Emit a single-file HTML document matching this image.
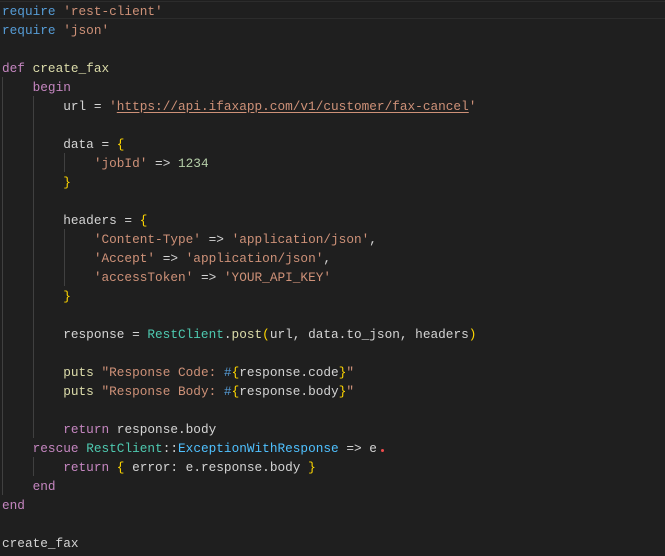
<!DOCTYPE html>
<html><head><meta charset="utf-8"><style>
html,body{margin:0;padding:0;background:#1f1f1f;width:665px;height:556px;overflow:hidden}
pre{position:absolute;left:2px;top:1.5px;margin:0;font-family:"Liberation Mono",monospace;font-size:12.75px;line-height:19px;color:#d4d4d4;white-space:pre}
.k{color:#569cd6}.s{color:#ce9178}.d{color:#c586c0}.f{color:#dcdcaa}.c{color:#4ec9b0}.c2{color:#4fc1ff}.b{color:#ffd700}.n{color:#b5cea8}.u{text-decoration:underline;text-underline-offset:2px}
.g{position:absolute;width:1px;background:#404040}
.cur{position:absolute;left:0;top:1px;width:665px;height:18px;border-top:1px solid #2c2c2c;border-bottom:1px solid #2c2c2c;box-sizing:border-box}
.dot{position:absolute;width:3px;height:3px;border-radius:50%;background:#f14c4c}
</style></head><body>
<div class="cur"></div>
<div class="g" style="left:2px;top:77px;height:418px"></div>
<div class="g" style="left:33px;top:96px;height:342px"></div>
<div class="g" style="left:33px;top:457px;height:19px"></div>
<div class="g" style="left:64px;top:153px;height:19px"></div>
<div class="g" style="left:64px;top:229px;height:57px"></div>
<div class="dot" style="left:381px;top:449px"></div>
<pre><span class="k">require</span> <span class="s">'rest-client'</span>
<span class="k">require</span> <span class="s">'json'</span>

<span class="d">def</span> <span class="f">create_fax</span>
    <span class="d">begin</span>
        url = <span class="s">'<span class="u">https://api.ifaxapp.com/v1/customer/fax-cancel</span>'</span>

        data = <span class="b">{</span>
            <span class="s">'jobId'</span> =&gt; <span class="n">1234</span>
        <span class="b">}</span>

        headers = <span class="b">{</span>
            <span class="s">'Content-Type'</span> =&gt; <span class="s">'application/json'</span>,
            <span class="s">'Accept'</span> =&gt; <span class="s">'application/json'</span>,
            <span class="s">'accessToken'</span> =&gt; <span class="s">'YOUR_API_KEY'</span>
        <span class="b">}</span>

        response = <span class="c">RestClient</span>.<span class="f">post</span><span class="b">(</span>url, data.to_json, headers<span class="b">)</span>

        <span class="f">puts</span> <span class="s">"Response Code: </span><span class="k">#</span><span class="b">{</span>response.code<span class="b">}</span><span class="s">"</span>
        <span class="f">puts</span> <span class="s">"Response Body: </span><span class="k">#</span><span class="b">{</span>response.body<span class="b">}</span><span class="s">"</span>

        <span class="d">return</span> response.body
    <span class="d">rescue</span> <span class="c">RestClient</span>::<span class="c2">ExceptionWithResponse</span> =&gt; e
        <span class="d">return</span> <span class="b">{</span> error: e.response.body <span class="b">}</span>
    <span class="d">end</span>
<span class="d">end</span>

create_fax</pre>
</body></html>
